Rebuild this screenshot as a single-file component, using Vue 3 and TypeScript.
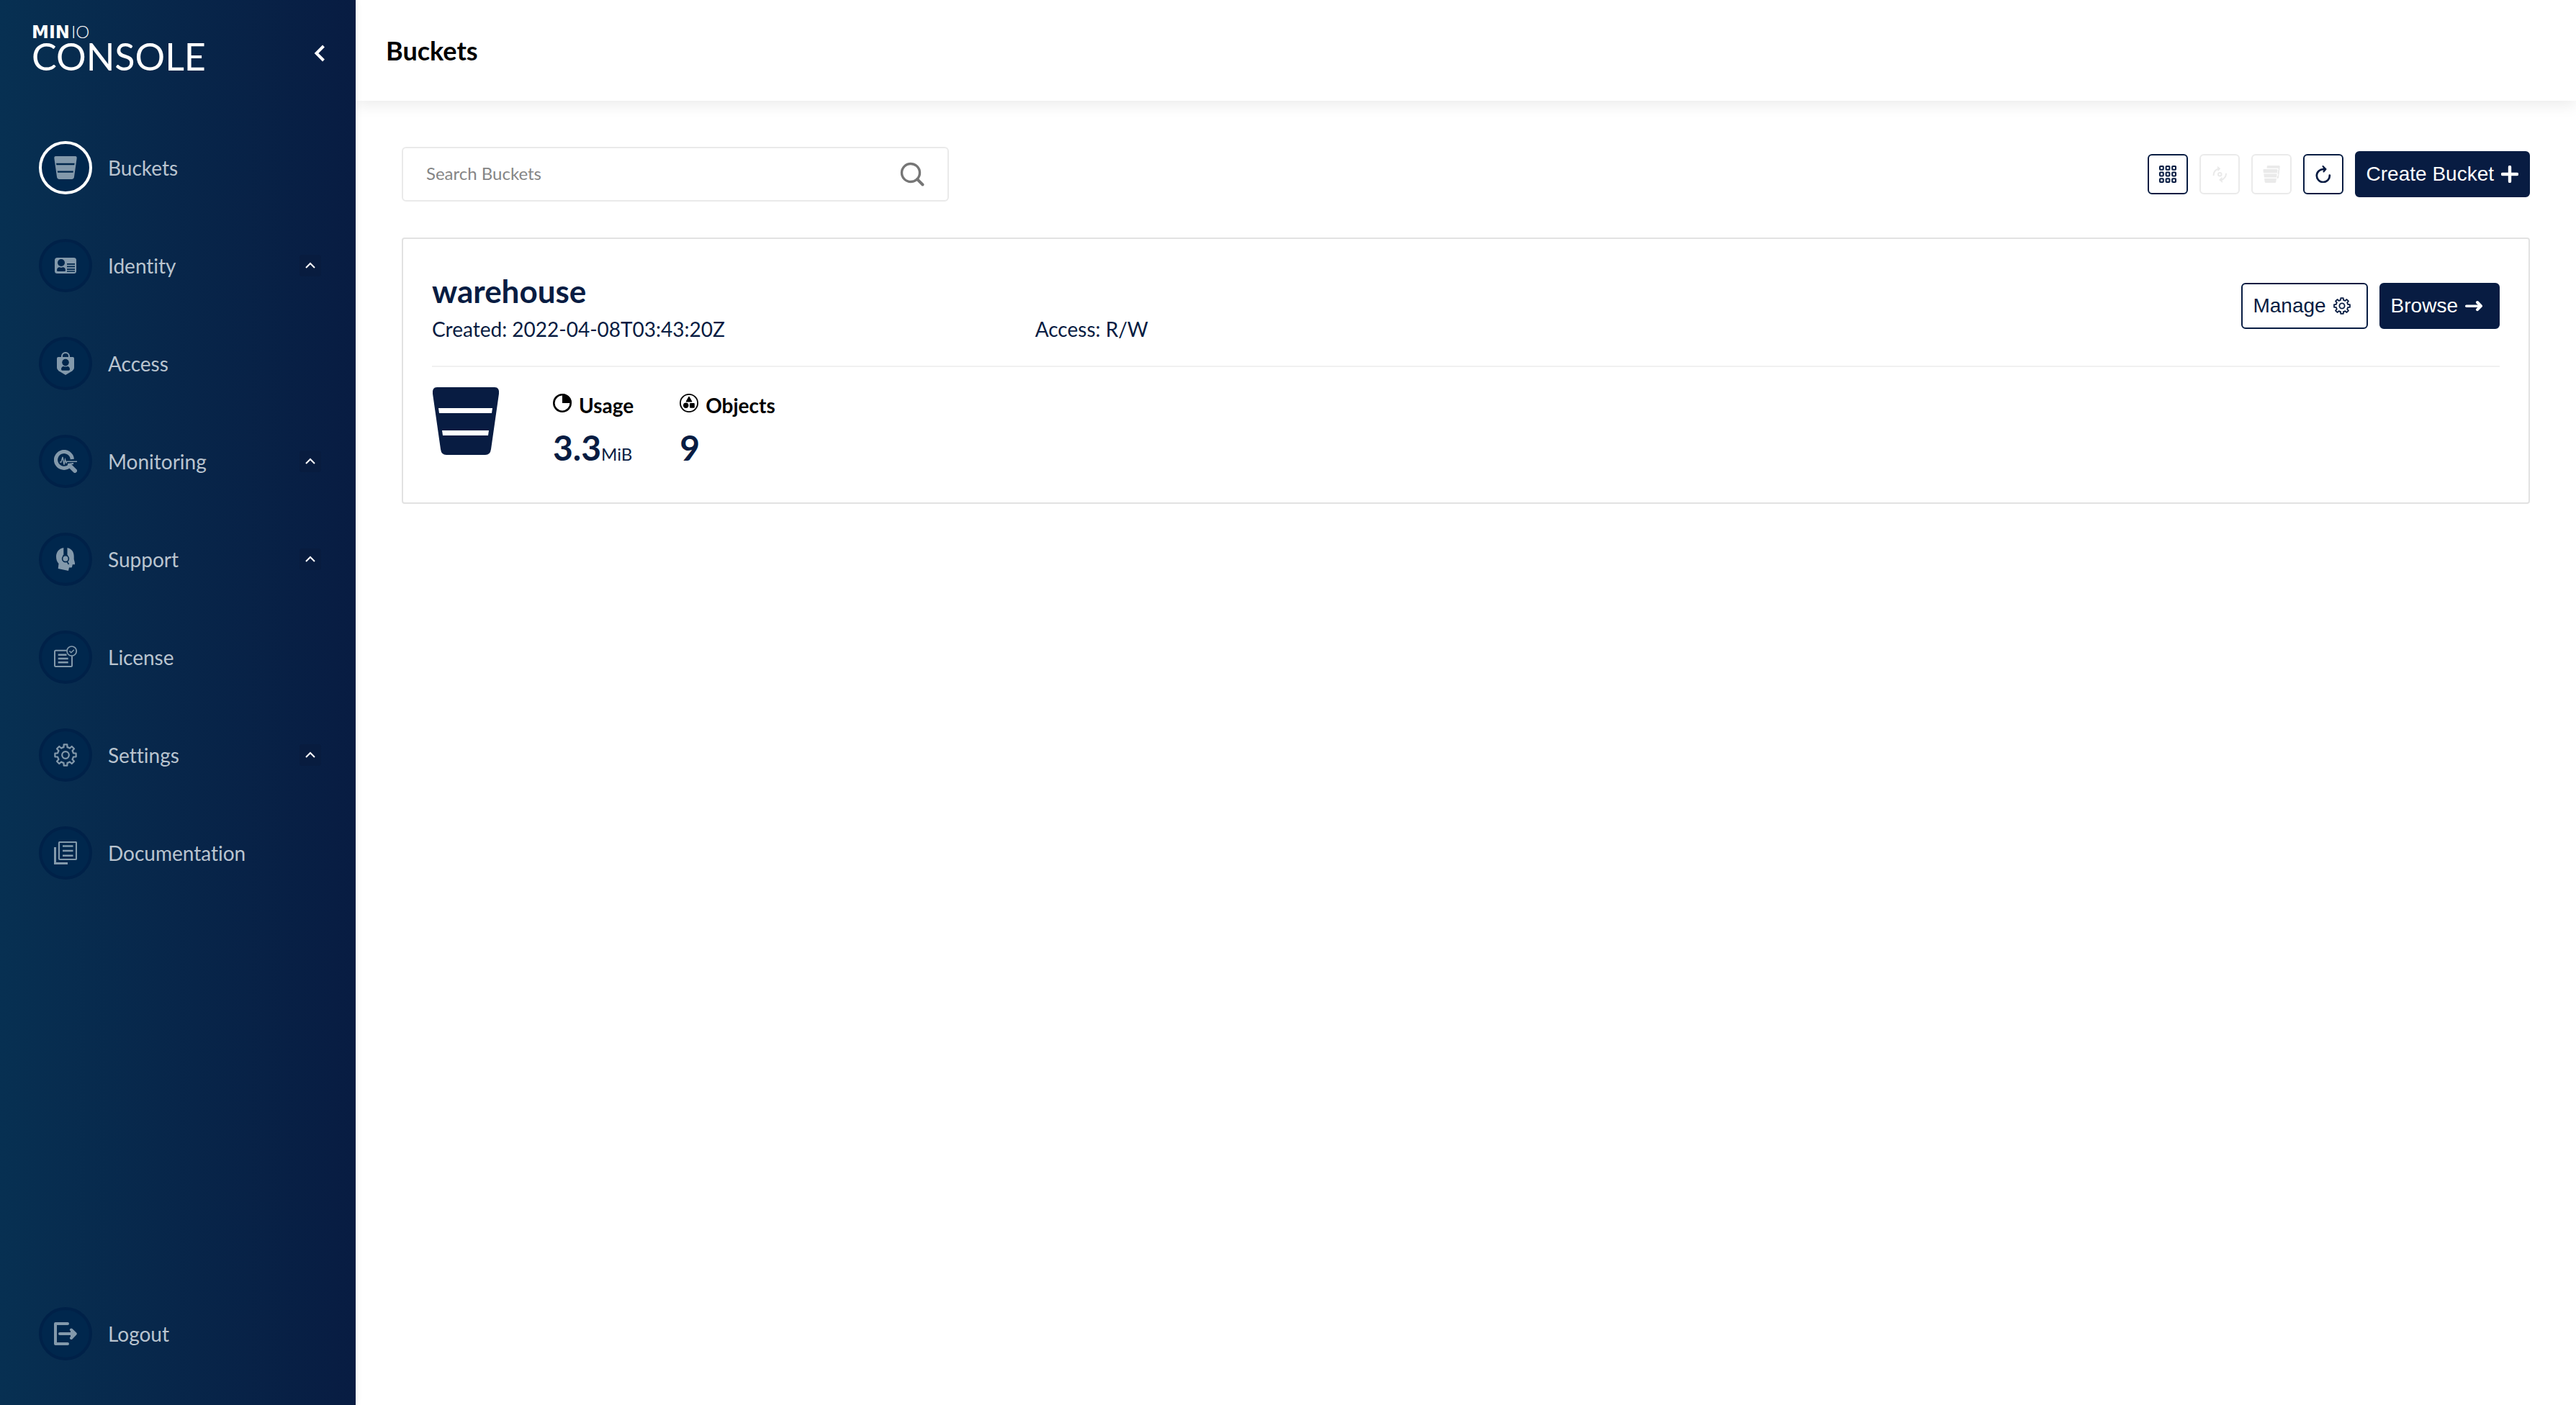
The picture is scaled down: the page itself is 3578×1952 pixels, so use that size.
<script setup lang="ts">
import { ref } from 'vue'

interface MenuItem {
  id: string
  label: string
  expandable?: boolean
}

const menu: MenuItem[] = [
  { id: 'buckets', label: 'Buckets' },
  { id: 'identity', label: 'Identity', expandable: true },
  { id: 'access', label: 'Access' },
  { id: 'monitoring', label: 'Monitoring', expandable: true },
  { id: 'support', label: 'Support', expandable: true },
  { id: 'license', label: 'License' },
  { id: 'settings', label: 'Settings', expandable: true },
  { id: 'documentation', label: 'Documentation' },
]

const active = ref('buckets')
const query = ref('')

// Outline of an eight-toothed gear centred in a 32 x 32 box.
function gearOutline(): string {
  const at = (radius: number, degrees: number): string => {
    const a = (degrees * Math.PI) / 180
    return `${(16 + radius * Math.sin(a)).toFixed(2)} ${(16 - radius * Math.cos(a)).toFixed(2)}`
  }
  let d = ''
  for (let k = 0; k < 8; k++) {
    const c = k * 45
    d += `${k ? 'L' : 'M'}${at(11.2, c - 13)}L${at(14.8, c - 9)}L${at(14.8, c + 9)}L${at(11.2, c + 13)}`
    d += `A11.2 11.2 0 0 1 ${at(11.2, c + 32)}`
  }
  return d + 'Z'
}
const gear = gearOutline()

const bucketShape =
  'M7 0H87Q94 0 93 9L82 86Q81 94 74 94H20Q13 94 12 86L1 9Q0 0 7 0ZM9 29L10 36H83L84 29ZM14 60L15 67H78L79 60Z'
</script>

<template>
  <div class="console">
    <aside class="sidebar">
      <div class="brand">
        <div class="logo">
          <span class="logo-top"><b>MIN</b><span>IO</span></span>
          <span class="logo-name">CONSOLE</span>
        </div>
        <button class="collapse" type="button" aria-label="Collapse menu">
          <svg width="16" height="24" viewBox="0 0 16 24"><path d="M13.500 2L3.500 12L13.500 22" fill="none" stroke="#fff" stroke-width="4" /></svg>
        </button>
      </div>

      <nav class="menu" aria-label="Main">
        <a
          v-for="item in menu"
          :key="item.id"
          :href="'#' + item.id"
          class="item"
          :class="{ active: item.id === active }"
          @click="active = item.id"
        >
          <span class="disc">
            <svg v-if="item.id === 'buckets'" viewBox="0 0 94 94" fill="currentColor" fill-rule="evenodd"><path :d="bucketShape" /></svg>
            <svg v-else-if="item.id === 'identity'" viewBox="0 0 32 32">
              <rect x="1" y="5" width="30" height="22" rx="3.500" fill="currentColor" />
              <g fill="#00274d">
                <circle cx="10" cy="12" r="5" />
                <path d="M4 22.500C4 19.500 6 18 8 18.200Q10 19.200 12 18.200C14 18 16 19.500 16 22.500Q16 24 14.500 24H5.500Q4 24 4 22.500Z" />
                <path d="M18 13h11v1.700H18zM18 16.600h11v1.700H18zM18 20.200h11v1.700H18zM18 23.300h11v1.400H18z" />
              </g>
            </svg>
            <svg v-else-if="item.id === 'access'" viewBox="0 0 32 32">
              <path d="M11 8V6a5 5 0 0 1 10 0V8" fill="none" stroke="currentColor" stroke-width="2" />
              <path d="M6 7H26Q28 7 28 9V22Q28 24.500 25.500 26.200L16 32L6.500 26.200Q4 24.500 4 22V9Q4 7 6 7Z" fill="currentColor" />
              <circle cx="16" cy="14.600" r="4.800" fill="#00274d" />
              <path d="M10 24C10 21 12 19.800 13.500 20Q16 21.200 18.500 20C20 19.800 22 21 22 24Q22 25.700 20.500 25.700H11.500Q10 25.700 10 24Z" fill="#00274d" />
            </svg>
            <svg v-else-if="item.id === 'monitoring'" viewBox="0 0 32 32" fill="none" stroke="currentColor">
              <path d="M25.300 13A11.400 11.400 0 1 0 22 22" stroke-width="5.200" />
              <path d="M22.500 22.500L29 29" stroke-width="6" stroke-linecap="round" />
              <path d="M19 20L27 19" stroke-width="2" />
              <path d="M8 17L10 17L12 10L14 20.500L15.500 13.500L17 18L18 16.200H32" stroke-width="1.400" />
            </svg>
            <svg v-else-if="item.id === 'support'" viewBox="0 0 32 32">
              <path d="M13.300 0C7 1 3 6 3 12.500C3 17 4.500 20 6.500 22L5.700 29L20 32L21 27.500H24Q25 27.500 25.200 26L25.800 23.300H29V21L27.700 16V12C27.700 5 23.500 1 18.500 0V10.500H13.300Z" fill="currentColor" />
              <path d="M13.300 10V12M18.300 10V12M18 19L20.500 23" stroke="#00274d" stroke-width="1.600" />
              <circle cx="16" cy="15.200" r="4.400" fill="currentColor" stroke="#00274d" stroke-width="1.600" />
            </svg>
            <svg v-else-if="item.id === 'license'" viewBox="0 0 32 32" fill="none" stroke="currentColor" stroke-width="2">
              <path d="M17.500 6.700H2.500Q1 6.700 1 8.200V27.500Q1 29 2.500 29H23.500Q25 29 25 27.500V15" />
              <path d="M5.700 12.700H17.500M5.700 18H19.700M5.700 23.300H19.700" stroke-width="2.600" />
              <circle cx="24.600" cy="7.600" r="6.600" stroke-width="1.700" />
              <path d="M21.500 7.500L23.800 9.800L27.800 5.800" stroke-width="1.500" />
            </svg>
            <svg v-else-if="item.id === 'settings'" viewBox="0 0 32 32" fill="none" stroke="currentColor" stroke-width="2.200" stroke-linejoin="round">
              <path :d="gear" />
              <circle cx="16" cy="16" r="4.800" />
            </svg>
            <svg v-else viewBox="0 0 32 32" fill="none" stroke="currentColor">
              <rect x="7" y="1" width="24" height="24" rx="1" stroke-width="2.200" />
              <path d="M12 6.500H26.500M12 13H26.500M12 19.800H26.500" stroke-width="2.600" />
              <path d="M1.500 8V30.500H19" stroke-width="3" />
            </svg>
          </span>
          <span class="label">{{ item.label }}</span>
          <span v-if="item.expandable" class="caret">
            <svg width="14" height="10" viewBox="0 0 14 10"><path d="M1 8L7 2L13 8" fill="none" stroke="#fff" stroke-width="2" /></svg>
          </span>
        </a>

        <a href="#logout" class="item logout">
          <span class="disc">
            <svg viewBox="0 0 32 32" fill="none" stroke="currentColor" stroke-width="4" stroke-linecap="round" stroke-linejoin="round">
              <path d="M19 2H2V30H19" />
              <path d="M8 16H29M24 10.500L29.700 16L24 22" />
              <path d="M24 12.500L28 16L24 19.500Z" stroke-width="2" fill="currentColor" />
            </svg>
          </span>
          <span class="label">Logout</span>
        </a>
      </nav>
    </aside>

    <div class="page">
      <header class="page-header">
        <h1>Buckets</h1>
      </header>

      <main class="content">
        <div class="toolbar">
          <label class="search">
            <input v-model="query" type="text" placeholder="Search Buckets" aria-label="Search Buckets" />
            <svg width="34" height="34" viewBox="0 0 34 34" fill="none" stroke="#767676">
              <circle cx="15" cy="15" r="12.500" stroke-width="3.400" />
              <path d="M24 24L31.500 31.500" stroke-width="4" stroke-linecap="round" />
            </svg>
          </label>

          <div class="actions">
            <button class="square" type="button" aria-label="Select multiple buckets">
              <svg width="24" height="24" viewBox="0 0 24 24" fill="none" stroke="currentColor" stroke-width="2">
                <template v-for="row in 3" :key="row">
                  <rect v-for="col in 3" :key="col" :x="col * 8.6 - 7.6" :y="row * 8.6 - 7.6" width="4.800" height="4.800" rx="0.800" />
                </template>
              </svg>
            </button>
            <button class="square" type="button" disabled aria-label="Set lifecycle">
              <svg width="24" height="24" viewBox="0 0 24 24" fill="currentColor">
                <path d="M3.500 14Q3.500 6.500 10.500 4.500M21.200 10.800Q20.500 18 14 20" fill="none" stroke="currentColor" stroke-width="2" />
                <path d="M8.800 0.700L13.300 4.300L9.700 8.300ZM15.300 15.800L11 20L16 24Z" />
                <circle cx="12.300" cy="12.300" r="2.300" fill="none" stroke="currentColor" stroke-width="2" />
              </svg>
            </button>
            <button class="square" type="button" disabled aria-label="Set replication">
              <svg width="24" height="24" viewBox="0 0 24 24" fill="currentColor">
                <path d="M7 0H22.500Q24 0 23.800 1.500L22 16.500Q21.700 18 20.500 18H19.600L20 14.500H21L21.400 11.500H20.400L21.700 5Q22 3.700 20.500 3.700H5.600L5.800 1Q6 0 7 0Z" />
                <path d="M1.500 5H19.500Q20.700 5 20.500 6.500L20 10.300H1L.5 6.500Q.3 5 1.500 5ZM1.300 11.600H19.700L19.100 16.500H1.900ZM2.100 17.900H18.900L18.400 22.500Q18.200 24 16.900 24H4.100Q2.800 24 2.600 22.500Z" />
              </svg>
            </button>
            <button class="square" type="button" aria-label="Refresh">
              <svg width="24" height="24" viewBox="0 0 24 24">
                <path d="M20.800 13.500A9 9 0 1 1 12.500 5.100" fill="none" stroke="currentColor" stroke-width="2.700" stroke-linecap="round" />
                <path d="M11.500 1L15.500 5L12.500 8.500" fill="currentColor" stroke="currentColor" stroke-width="2" stroke-linejoin="round" stroke-linecap="round" />
              </svg>
            </button>
            <button class="button solid" type="button">
              Create Bucket
              <svg width="24" height="24" viewBox="0 0 24 24"><path d="M12 2V22M2 12H22" stroke="currentColor" stroke-width="4.400" stroke-linecap="round" /></svg>
            </button>
          </div>
        </div>

        <section class="card">
          <div class="card-head">
            <h2>warehouse</h2>
            <div class="facts">
              <span>Created: 2022-04-08T03:43:20Z</span>
              <span>Access: R/W</span>
            </div>
            <div class="card-actions">
              <button class="button wide" type="button">
                Manage
                <svg width="24" height="24" viewBox="0 0 32 32" fill="none" stroke="currentColor" stroke-width="2.400" stroke-linejoin="round">
                  <path :d="gear" />
                  <circle cx="16" cy="16" r="4.800" />
                </svg>
              </button>
              <button class="button solid wide" type="button">
                Browse
                <svg width="24" height="24" viewBox="0 0 24 24" fill="none" stroke="currentColor" stroke-linecap="round" stroke-linejoin="round">
                  <path d="M1.800 12.200H21" stroke-width="3.600" />
                  <path d="M17 7L22 12.200L17 17.200" stroke-width="4" />
                </svg>
              </button>
            </div>
          </div>

          <div class="card-body">
            <svg class="bucket" width="94" height="94" viewBox="0 0 94 94" fill="currentColor" fill-rule="evenodd"><path :d="bucketShape" /></svg>
            <div class="metric">
              <div class="metric-name">
                <svg width="26" height="26" viewBox="0 0 26 26">
                  <circle cx="13" cy="13" r="11.700" fill="none" stroke="#000" stroke-width="2.600" />
                  <path d="M13 0A13 13 0 0 1 26 13H13Z" />
                </svg>
                <span>Usage</span>
              </div>
              <div class="metric-value">3.3<small>MiB</small></div>
            </div>
            <div class="metric">
              <div class="metric-name">
                <svg width="26" height="26" viewBox="0 0 26 26">
                  <circle cx="13" cy="13" r="12.100" fill="none" stroke="#000" stroke-width="1.800" />
                  <path d="M13 4L17 11H9Z" stroke="#000" stroke-linejoin="round" />
                  <circle cx="8.700" cy="16.300" r="3.700" />
                  <rect x="14" y="12.900" width="6.800" height="6.800" rx="1.200" />
                </svg>
                <span>Objects</span>
              </div>
              <div class="metric-value">9</div>
            </div>
          </div>
        </section>
      </main>
    </div>
  </div>
</template>

<style>
body {
  margin: 0;
  background: #fff;
}
</style>

<style scoped>
.console {
  display: flex;
  min-height: 100vh;
  font-family: Lato, "Open Sans", sans-serif;
  font-size: 28px;
  font-variant-ligatures: none;
  color: #081c42;
}

.console * {
  box-sizing: border-box;
}

svg {
  display: block;
  flex: none;
}

button {
  cursor: pointer;
}

.sidebar {
  display: flex;
  flex-direction: column;
  flex: none;
  width: 494px;
  padding: 32px 48px 62px 44px;
  background: linear-gradient(90deg, #073052 0%, #081c42 100%);
  box-shadow: 0 0 10px rgba(0, 0, 0, 0.08);
  z-index: 1;
}

.brand {
  display: flex;
  justify-content: space-between;
  align-items: center;
  height: 84px;
  color: #fff;
}

.logo {
  display: flex;
  flex-direction: column;
  align-self: flex-start;
}

.logo-top {
  display: flex;
  align-items: baseline;
  gap: 2px;
  font-size: 24px;
  line-height: 24px;
}

.logo-top b {
  font-family: "DejaVu Sans", Verdana, sans-serif;
  font-weight: 700;
}

.logo-top span {
  font-weight: 300;
}

.logo-name {
  font-size: 52px;
  line-height: 42px;
}

.collapse {
  padding: 0;
  border: 0;
  background: none;
}

.collapse svg {
  margin-right: -6px;
}

.menu {
  display: flex;
  flex-direction: column;
  flex: 1;
  gap: 62px;
  padding: 80px 0 0 10px;
}

.item {
  display: flex;
  align-items: center;
  gap: 22px;
  height: 74px;
  color: #b9c4cf;
  text-decoration: none;
}

.disc {
  display: flex;
  align-items: center;
  justify-content: center;
  flex: none;
  width: 74px;
  height: 74px;
  border: 4px solid #002148;
  border-radius: 50%;
  background: #00274d;
  color: #8399ab;
}

.disc svg {
  width: 32px;
  height: 32px;
}

.active .disc {
  border-color: #fff;
}

.label {
  flex: 1;
  line-height: 36px;
}

.caret {
  display: flex;
  align-items: center;
  justify-content: center;
  width: 30px;
  height: 30px;
  border-radius: 4px;
  background: #081c3f;
}

.logout {
  margin-top: auto;
}

.page {
  flex: 1;
  min-width: 0;
}

.page-header {
  display: flex;
  align-items: center;
  height: 140px;
  padding: 0 42px;
  box-shadow: 0 6px 20px rgba(0, 0, 0, 0.08);
}

h1 {
  margin: 0;
  font-size: 36px;
  line-height: 44px;
  font-weight: 700;
  color: #000;
}

.content {
  padding: 64px;
}

.toolbar {
  display: flex;
  align-items: center;
  justify-content: space-between;
  margin-bottom: 50px;
}

.search {
  display: flex;
  align-items: center;
  width: 760px;
  height: 76px;
  padding: 0 32px;
  border: 2px solid #eaeaea;
  border-radius: 6px;
}

.search input {
  flex: 1;
  min-width: 0;
  padding: 0 0 4px;
  border: 0;
  outline: 0;
  background: none;
  font: inherit;
  font-size: 24px;
  color: #081c42;
}

.search input::placeholder {
  color: #858585;
  opacity: 1;
}

.actions,
.card-actions {
  display: flex;
  align-items: center;
  gap: 16px;
}

.square {
  display: flex;
  align-items: center;
  justify-content: center;
  width: 56px;
  height: 56px;
  padding: 0;
  border: 2px solid #081c42;
  border-radius: 6px;
  background: #fff;
  color: #081c42;
}

.square:disabled {
  border-color: #eaeaea;
  color: #eaeaea;
}

.button {
  display: flex;
  align-items: center;
  gap: 10px;
  height: 64px;
  padding: 0 14px;
  border: 2px solid #081c42;
  border-radius: 6px;
  background: #fff;
  font-family: "Liberation Sans", Arial, sans-serif;
  font-size: 28px;
  color: #081c42;
}

.solid {
  background: #081c42;
  color: #fff;
}

.wide {
  padding-right: 22px;
}

.card {
  padding: 44px 40px 36px;
  border: 2px solid #e2e2e2;
  border-radius: 4px;
}

.card-head {
  display: grid;
  grid-template-columns: 7fr 5fr;
  align-items: center;
  padding-bottom: 26px;
  border-bottom: 2px solid #f0f0f0;
}

h2 {
  margin: 0;
  font-size: 44px;
  line-height: 56px;
  font-weight: 700;
}

.facts {
  display: grid;
  grid-template-columns: 1fr 1fr;
  grid-row: 2;
  line-height: 50px;
}

.card-actions {
  grid-column: 2;
  grid-row: 1 / 3;
  justify-content: flex-end;
  padding-bottom: 8px;
}

.card-body {
  display: flex;
  align-items: flex-start;
  padding-top: 28px;
}

.bucket {
  margin-right: 74px;
}

.metric {
  margin-right: 64px;
}

.metric-name {
  display: flex;
  align-items: center;
  gap: 10px;
  height: 44px;
  font-weight: 700;
  line-height: 36px;
  color: #000;
}

.metric-name span {
  padding-top: 6px;
}

.metric-value {
  font-size: 48px;
  line-height: 80px;
  font-weight: 700;
}

.metric-value small {
  font-size: 24px;
  line-height: 24px;
  font-weight: 400;
}
</style>
